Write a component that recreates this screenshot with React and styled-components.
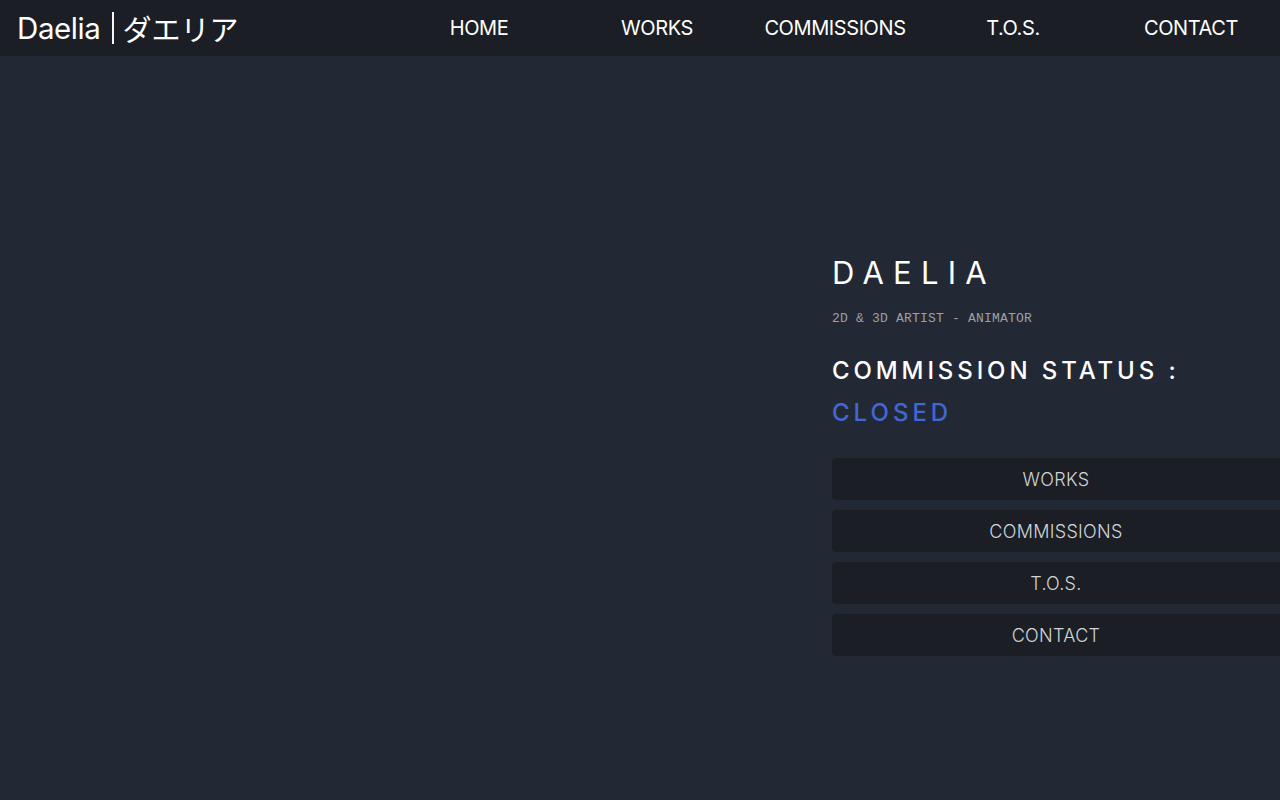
import styled, { createGlobalStyle } from 'styled-components';

const GlobalStyle = createGlobalStyle`
  html, body {
    margin: 0;
    padding: 0;
    background-color: #232934;
    font-family: Inter, "Noto Sans", sans-serif;
  }
`;

const navItems = ['HOME', 'WORKS', 'COMMISSIONS', 'T.O.S.', 'CONTACT'];
const menuItems = ['WORKS', 'COMMISSIONS', 'T.O.S.', 'CONTACT'];

const App = () => {
  return (
    <Page>
      <GlobalStyle />
      <Header>
        <Logo>
          Daelia
          <Bar />
          <Kana>ダエリア</Kana>
        </Logo>
        <Nav>
          {navItems.map((item) => (
            <NavLink key={item}>{item}</NavLink>
          ))}
        </Nav>
      </Header>
      <Main>
        <Info>
          <Name>DAELIA</Name>
          <Subtitle>2D &amp; 3D ARTIST - ANIMATOR</Subtitle>
          <StatusLabel>COMMISSION STATUS :</StatusLabel>
          <StatusValue>CLOSED</StatusValue>
          <Menu>
            {menuItems.map((item) => (
              <MenuButton key={item}>{item}</MenuButton>
            ))}
          </Menu>
        </Info>
      </Main>
    </Page>
  );
};

const Page = styled.div`
  min-height: 100vh;
  background-color: #232934;
  overflow: hidden;
`;

const Header = styled.header`
  display: flex;
  align-items: center;
  height: 56px;
  background-color: #1b1f25;
  padding-left: 17px;
`;

const Logo = styled.div`
  display: flex;
  align-items: center;
  width: 374px;
  color: #ffffff;
  font-size: 29.5px;
  font-family: Inter, "Noto Sans CJK JP", sans-serif;
  letter-spacing: -0.4px;
`;

const Bar = styled.span`
  display: inline-block;
  width: 2px;
  height: 32px;
  background-color: #f4f6fa;
  margin: 0 9px 0 11px;
`;

const Kana = styled.span`
  font-family: "Noto Sans CJK JP", sans-serif;
  font-size: 29px;
  letter-spacing: 0;
`;

const Nav = styled.nav`
  display: grid;
  grid-template-columns: repeat(5, 178px);
  margin-left: auto;
`;

const NavLink = styled.a`
  text-align: center;
  color: #ffffff;
  font-size: 20px;
  font-weight: 400;
  letter-spacing: -0.4px;
  cursor: pointer;
`;

const Main = styled.main`
  display: flex;
  justify-content: flex-end;
  padding-top: 200px;
`;

const Info = styled.section`
  display: flex;
  flex-direction: column;
  width: 448px;
`;

const Name = styled.h1`
  margin: 0;
  color: #ffffff;
  font-size: 31px;
  font-weight: 400;
  letter-spacing: 9.2px;
  line-height: 34px;
`;

const Subtitle = styled.div`
  margin-top: 21px;
  color: #9ba0a8;
  font-family: "Liberation Mono", monospace;
  font-size: 13px;
  letter-spacing: 0.2px;
`;

const StatusLabel = styled.h2`
  margin: 29px 0 0;
  color: #ffffff;
  font-size: 24px;
  font-weight: 500;
  letter-spacing: 3.9px;
  line-height: 32px;
`;

const StatusValue = styled.div`
  margin-top: 10px;
  color: #4067d4;
  font-size: 24px;
  font-weight: 500;
  letter-spacing: 4px;
  line-height: 32px;
`;

const Menu = styled.div`
  display: flex;
  flex-direction: column;
  gap: 10px;
  margin-top: 29px;
`;

const MenuButton = styled.button`
  height: 42px;
  border: none;
  border-radius: 4px 0 0 4px;
  background-color: #1b1f25;
  color: #d2d4d8;
  font-family: Inter, sans-serif;
  font-size: 18px;
  font-weight: 300;
  letter-spacing: 0.3px;
  cursor: pointer;
`;

export default App;
